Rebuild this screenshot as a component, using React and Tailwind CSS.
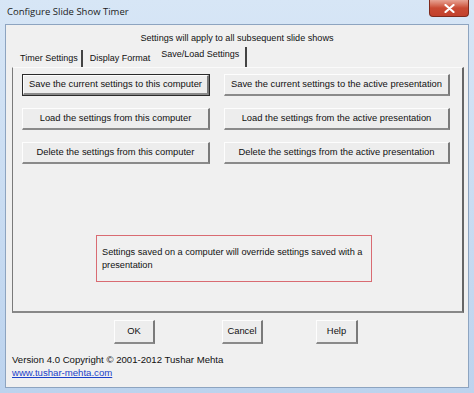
import React from "react";

const ff = { fontFamily: '"Liberation Sans", Arial, sans-serif' };

function Btn({ children, focused, className = "" }) {
  return (
    <div
      className={
        "flex items-center justify-center h-[22px] bg-[#ededed] text-[9.4px] text-[#111] " +
        (focused
          ? "border border-[#2a2a2a] "
          : "border-t border-l border-t-[#fdfdfd] border-l-[#fdfdfd] border-r-2 border-b-2 border-r-[#7a7a7a] border-b-[#8a8a8a] ") +
        className
      }
    >
      {focused ? (
        <div className="flex items-center justify-center w-full h-full border-t border-l border-t-[#fdfdfd] border-l-[#fdfdfd] border-r-2 border-b-2 border-r-[#7a7a7a] border-b-[#8a8a8a]">
          {children}
        </div>
      ) : (
        children
      )}
    </div>
  );
}

export default function App() {
  return (
    <div className="w-[474px] h-[393px] bg-gradient-to-b from-[#d7e6f6] to-[#bcd3ee] overflow-hidden" style={ff}>
      <div className="flex items-start justify-between h-[24px]">
        <div className="pl-[7px] pt-[5px] text-[9.5px] leading-[14px] text-[#1b1b1b]" style={{ fontFamily: '"Open Sans", "Noto Sans", sans-serif' }}>
          Configure Slide Show Timer
        </div>
        <div className="mr-[5px] w-[40px] h-[17px] rounded-b-[4px] bg-gradient-to-b from-[#e7a394] via-[#c94a33] to-[#c2412d] border border-[#7f2a1c] border-t-0 flex items-center justify-center">
          <svg width="11" height="9" viewBox="0 0 11 9">
            <path d="M1.5 1 L9.5 8 M9.5 1 L1.5 8" stroke="#fff" strokeWidth="2.2" strokeLinecap="round" />
          </svg>
        </div>
      </div>
      <div className="mx-[5px] h-[364px] bg-[#f0f0f0] border border-[#8da4c0] flex flex-col">
        <div className="text-center text-[9.1px] text-[#111] mt-[5px] h-[16px] leading-[16px]">
          Settings will apply to all subsequent slide shows
        </div>
        <div className="flex items-end h-[21px] pl-[14px] text-[9px] text-[#111]">
          <div className="h-[17px] flex items-center pr-[3px] border-r-2 border-r-[#444]">Timer Settings</div>
          <div className="h-[17px] flex items-center pl-[7px] pr-[11px]">Display Format</div>
          <div className="h-[20px] flex items-start pt-[1px] pr-[6px] border-r-2 border-r-[#444]">Save/Load Settings</div>
        </div>
        <div className="ml-[6px] w-[452px] h-[246px] border-l border-t border-l-[#7a7a7a] border-t-[#fafafa] border-r-2 border-b-2 border-r-[#666] border-b-[#888] pt-[6px] pl-[9px]">
          <div className="grid grid-cols-[188px_226px] gap-x-[14px] gap-y-[12px]">
            <Btn focused>Save the current settings to this computer</Btn>
            <Btn>Save the current settings to the active presentation</Btn>
            <Btn>Load the settings from this computer</Btn>
            <Btn>Load the settings from the active presentation</Btn>
            <Btn>Delete the settings from this computer</Btn>
            <Btn>Delete the settings from the active presentation</Btn>
          </div>
          <div className="ml-[74px] mt-[71px] w-[276px] h-[47px] border border-[#d96b72] pl-[5px] pr-[2px] pt-[10px] text-[9.2px] leading-[13px] text-[#111]">
            Settings saved on a computer will override settings saved with a presentation
          </div>
        </div>
        <div className="flex h-[24px] mt-[7px]">
          <Btn className="ml-[108px] w-[41px] !h-[24px]">OK</Btn>
          <Btn className="ml-[67px] w-[41px] !h-[24px]">Cancel</Btn>
          <Btn className="ml-[53px] w-[42px] !h-[24px]">Help</Btn>
        </div>
        <div className="pl-[6px] mt-[9px] text-[9.6px] leading-[13px] text-[#111]">Version 4.0 Copyright © 2001-2012 Tushar Mehta</div>
        <div className="pl-[6px] text-[9.6px] leading-[13px] text-[#1a3fc9] underline">www.tushar-mehta.com</div>
      </div>
    </div>
  );
}
